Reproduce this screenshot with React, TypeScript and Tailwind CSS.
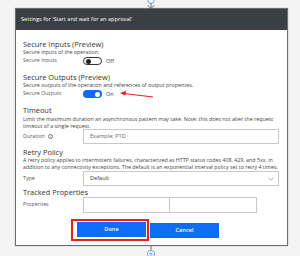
import React from "react";

function Toggle({ on }: { on: boolean }) {
  return on ? (
    <div className="w-[19px] h-[8px] rounded-full bg-[#0f6cf0] flex items-center justify-end pr-[2px]">
      <div className="w-[5px] h-[5px] rounded-full bg-white" />
    </div>
  ) : (
    <div className="w-[19px] h-[8px] rounded-full border border-[#333] bg-white flex items-center pl-[1.5px]">
      <div className="w-[5px] h-[5px] rounded-full bg-[#222]" />
    </div>
  );
}

export default function App() {
  return (
    <div className="w-[300px] h-[256px] bg-[#f4f4f4] relative overflow-hidden font-['Open_Sans',sans-serif] text-[#333]">
      {/* top connector */}
      <svg className="absolute left-[145px] top-0" width="12" height="9" viewBox="0 0 12 9">
        <circle cx="6" cy="0.5" r="3" fill="white" stroke="#3b8be0" strokeWidth="0.8" />
        <line x1="6" y1="3" x2="6" y2="8.5" stroke="#555" strokeWidth="0.8" />
        <polyline points="2.5,5 6,8.5 9.5,5" fill="none" stroke="#555" strokeWidth="0.8" />
      </svg>

      <div className="ml-[15px] mt-[8px] w-[273px] h-[238px] bg-white border border-[#6e6e6e] shadow-[0_0_1px_rgba(0,0,0,0.4)] flex flex-col">
        <div className="h-[21px] bg-[#3a3f45] text-white text-[5.6px] px-[5px] flex items-center shrink-0">
          Settings for 'Start and wait for an approval'
        </div>
        <div className="pl-[7px] pr-[8px] pt-[9px] flex flex-col">
          <div className="text-[7.4px] leading-[10px] h-[10px]">Secure Inputs (Preview)</div>
          <div className="text-[5.3px] leading-[7px] text-[#444]">Secure inputs of the operation.</div>
          <div className="mt-[1px] h-[8px] flex items-center">
            <div className="w-[60px] text-[5.3px] text-[#555]">Secure Inputs</div>
            <Toggle on={false} />
            <div className="ml-[4px] text-[5.6px] text-[#444]">Off</div>
          </div>

          <div className="mt-[7px] text-[7.4px] leading-[10px] h-[10px]">Secure Outputs (Preview)</div>
          <div className="text-[5.3px] leading-[7px] text-[#444]">
            Secure outputs of the operation and references of output properties.
          </div>
          <div className="mt-[1px] h-[8px] flex items-center">
            <div className="w-[60px] text-[5.3px] text-[#555]">Secure Outputs</div>
            <Toggle on={true} />
            <div className="ml-[4px] text-[5.6px] text-[#444]">On</div>
          </div>

          <div className="mt-[7px] text-[7.4px] leading-[10px] h-[10px]">Timeout</div>
          <div className="mt-[1px] text-[5.3px] leading-[6.5px] text-[#444]">
            Limit the maximum duration an asynchronous pattern may take. Note: this does not alter the request
            <br />
            timeout of a single request.
          </div>
          <div className="h-[15px] flex items-center">
            <div className="w-[60px] flex items-center text-[5.3px] text-[#555]">
              Duration
              <span className="ml-[3px] w-[5px] h-[5px] rounded-full border border-[#777] text-[3.5px] leading-none flex items-center justify-center text-[#555]">
                i
              </span>
            </div>
            <div className="flex-1 h-[15px] border border-[#c8c8c8] flex items-center pl-[6px] text-[5.6px] text-[#666]">
              Example: P1D
            </div>
          </div>

          <div className="mt-[3px] text-[7.4px] leading-[10px] h-[10px]">Retry Policy</div>
          <div className="text-[5.3px] leading-[7px] text-[#444]">
            A retry policy applies to intermittent failures, characterized as HTTP status codes 408, 429, and 5xx, in
            <br />
            addition to any connectivity exceptions. The default is an exponential interval policy set to retry 4 times.
          </div>
          <div className="h-[15px] flex items-center">
            <div className="w-[60px] text-[5.3px] text-[#555]">Type</div>
            <div className="flex-1 h-[15px] border border-[#c8c8c8] flex items-center justify-between pl-[6px] pr-[4px] text-[5.6px] text-[#333]">
              Default
              <svg width="6" height="4" viewBox="0 0 6 4">
                <polyline points="0.5,0.8 3,3.2 5.5,0.8" fill="none" stroke="#777" strokeWidth="0.6" />
              </svg>
            </div>
          </div>

          <div className="mt-[2px] text-[7.4px] leading-[9px] h-[9px]">Tracked Properties</div>
          <div className="h-[16px] flex items-center">
            <div className="w-[60px] text-[5.3px] text-[#555]">Properties</div>
            <div className="w-[87px] h-[16px] border border-[#c8c8c8]" />
            <div className="w-[87px] h-[16px] border border-l-0 border-[#c8c8c8]" />
          </div>

          <div className="mt-[6px] ml-[48px] flex items-center">
            <div className="border-2 border-[#e8201c] pl-[4px] pr-[1px] pt-[1px] pb-[2px]">
              <div className="w-[69px] h-[15px] bg-[#0f6cf5] text-white text-[5.6px] font-semibold flex items-center justify-center">
                Done
              </div>
            </div>
            <div className="ml-[1px] w-[69px] h-[15px] bg-[#0f6cf5] text-white text-[5.6px] font-semibold flex items-center justify-center">
              Cancel
            </div>
          </div>
        </div>
      </div>

      {/* red arrow annotation */}
      <svg className="absolute left-[118px] top-[89px]" width="38" height="10" viewBox="0 0 38 10">
        <line x1="35" y1="8" x2="4" y2="4.3" stroke="#e8201c" strokeWidth="1.1" />
        <polygon points="2,4 8,2 7.4,6.4" fill="#e8201c" />
      </svg>

      {/* bottom connector */}
      <svg className="absolute left-[145px] top-[246px]" width="12" height="10" viewBox="0 0 12 10">
        <line x1="6" y1="0" x2="6" y2="4" stroke="#555" strokeWidth="0.8" />
        <circle cx="6" cy="8" r="3.6" fill="white" stroke="#3b8be0" strokeWidth="0.8" />
        <line x1="6" y1="6" x2="6" y2="10" stroke="#3b8be0" strokeWidth="0.7" />
        <line x1="4" y1="8" x2="8" y2="8" stroke="#3b8be0" strokeWidth="0.7" />
      </svg>
    </div>
  );
}
